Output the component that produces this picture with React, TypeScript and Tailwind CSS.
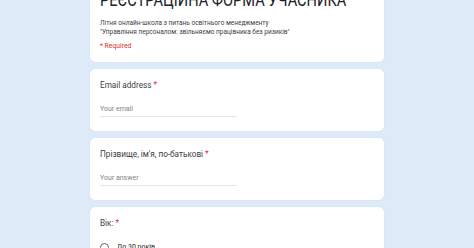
import React from 'react';

const font = { fontFamily: 'Roboto, "Noto Sans", sans-serif' };

const Card: React.FC<{ children: React.ReactNode; className?: string }> = ({ children, className = '' }) => (
  <div className={`w-[294px] rounded-[5px] bg-white px-[10px] shadow-[0_0_1px_rgba(0,0,0,0.15)] ${className}`}>
    {children}
  </div>
);

const TextQuestion: React.FC<{ label: string; placeholder: string }> = ({ label, placeholder }) => (
  <Card className="pt-[11px] pb-[14px]">
    <div className="text-[8.2px] leading-[10px] text-[#3c4043]">
      {label} <span className="text-[#d93025]">*</span>
    </div>
    <div className="mt-[15px] w-[137px] border-b border-[#e4e6ea] pb-[2px] text-[7px] leading-[9px] text-[#80868b]">
      {placeholder}
    </div>
  </Card>
);

export default function App() {
  return (
    <div className="h-[248px] w-[474px] overflow-hidden bg-[#ddebf9]" style={font}>
      <div className="flex flex-col items-center gap-[7px]">
        <Card className="-mt-[20px] pt-[11px] pb-[11px]">
          <h1 className="origin-bottom-left scale-y-[1.2] whitespace-nowrap text-[14.6px] leading-[22px] text-[#202124]">
            РЕЄСТРАЦІЙНА ФОРМА УЧАСНИКА
          </h1>
          <p className="mt-[6px] text-[6.5px] leading-[9px] text-[#3c4043]">
            Літня онлайн-школа з питань освітнього менеджменту
            <br />
            "Управління персоналом: звільняємо працівника без ризиків"
          </p>
          <div className="mt-[5px] text-[6.8px] leading-[9px] text-[#d93025]">* Required</div>
        </Card>

        <TextQuestion label="Email address" placeholder="Your email" />
        <TextQuestion label="Прізвище, ім'я, по-батькові" placeholder="Your answer" />

        <Card className="pt-[11px] pb-[14px]">
          <div className="text-[8.2px] leading-[10px] text-[#3c4043]">
            Вік: <span className="text-[#d93025]">*</span>
          </div>
          <div className="mt-[15px] flex items-center gap-[8px]">
            <span className="h-[9px] w-[9px] rounded-full border border-[#5f6368]" />
            <span className="text-[7px] leading-[9px] text-[#202124]">До 30 років</span>
          </div>
        </Card>
      </div>
    </div>
  );
}
